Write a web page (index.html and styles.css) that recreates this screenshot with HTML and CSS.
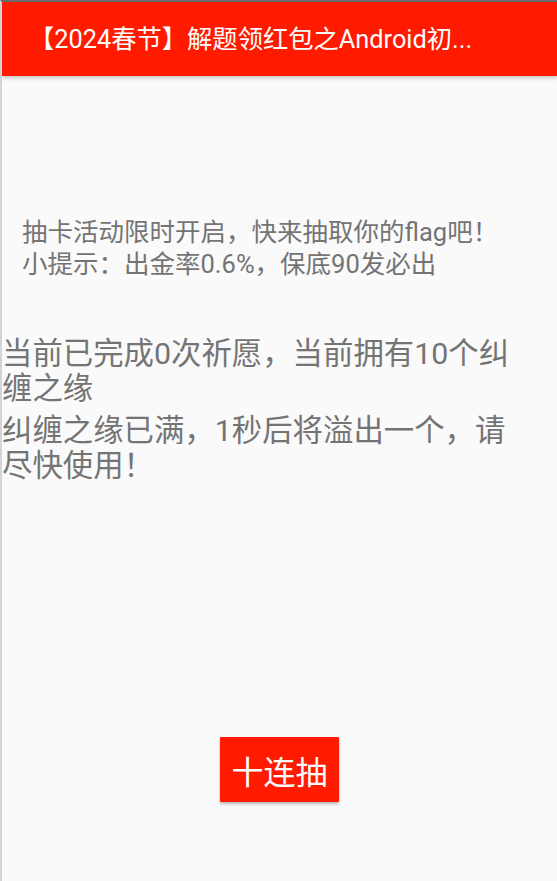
FILE: index.html
```html
<!DOCTYPE html>
<html lang="zh-CN">
<head>
<meta charset="utf-8">
<title>【2024春节】解题领红包之Android初级题</title>
<link rel="stylesheet" href="styles.css">
</head>
<body>
<div class="frame">
  <header class="appbar">
    <h1 class="title">【2024春节】解题领红包之Android初...</h1>
  </header>
  <main class="content">
    <div class="notice">
      <p>抽卡活动限时开启，快来抽取你的flag吧！</p>
      <p>小提示：出金率0.6%，保底90发必出</p>
    </div>
    <div class="status">
      <p>当前已完成0次祈愿，当前拥有10个纠缠之缘</p>
      <p class="warn">纠缠之缘已满，1秒后将溢出一个，请尽快使用！</p>
    </div>
    <div class="actions">
      <button class="draw" type="button">十连抽</button>
    </div>
  </main>
</div>
</body>
</html>
```

FILE: styles.css
```css
html, body {
  margin: 0;
  padding: 0;
  background: #fafafa;
}

body {
  font-family: Roboto, "Noto Sans CJK SC", sans-serif;
}

.frame {
  height: 879px;
  border-top: 2px solid #6a6a6a;
  border-left: 2px solid #d4d4d8;
  background: #fafafa;
  display: flex;
  flex-direction: column;
  overflow: hidden;
}

.appbar {
  height: 74px;
  flex: none;
  background: #ff1a00;
  display: flex;
  align-items: center;
  padding-left: 27px;
  box-shadow: 0 2px 4px rgba(0, 0, 0, 0.22);
  position: relative;
  z-index: 1;
}

.title {
  margin: 0 0 -2px;
  color: #ffffff;
  font-size: 25.3px;
  font-weight: 400;
  line-height: 1.2;
  white-space: nowrap;
}

.content {
  display: flex;
  flex-direction: column;
}

.notice {
  margin-top: 140px;
  padding-left: 20px;
  color: #747474;
  font-size: 25.5px;
  line-height: 32px;
}

.notice p,
.status p {
  margin: 0;
}

.status {
  margin-top: 56px;
  width: 524px;
  color: #747474;
  font-size: 30.4px;
  line-height: 35px;
}

.status .warn {
  margin-top: 7px;
}

.actions {
  display: flex;
  justify-content: center;
  margin-top: 254px;
}

.draw {
  width: 119px;
  height: 65px;
  border: none;
  border-radius: 1px;
  background: #ff1a00;
  color: #ffffff;
  font-family: Roboto, "Noto Sans CJK SC", sans-serif;
  font-size: 32px;
  padding: 0;
  box-shadow: 0 2px 3px rgba(0, 0, 0, 0.28);
}
```
